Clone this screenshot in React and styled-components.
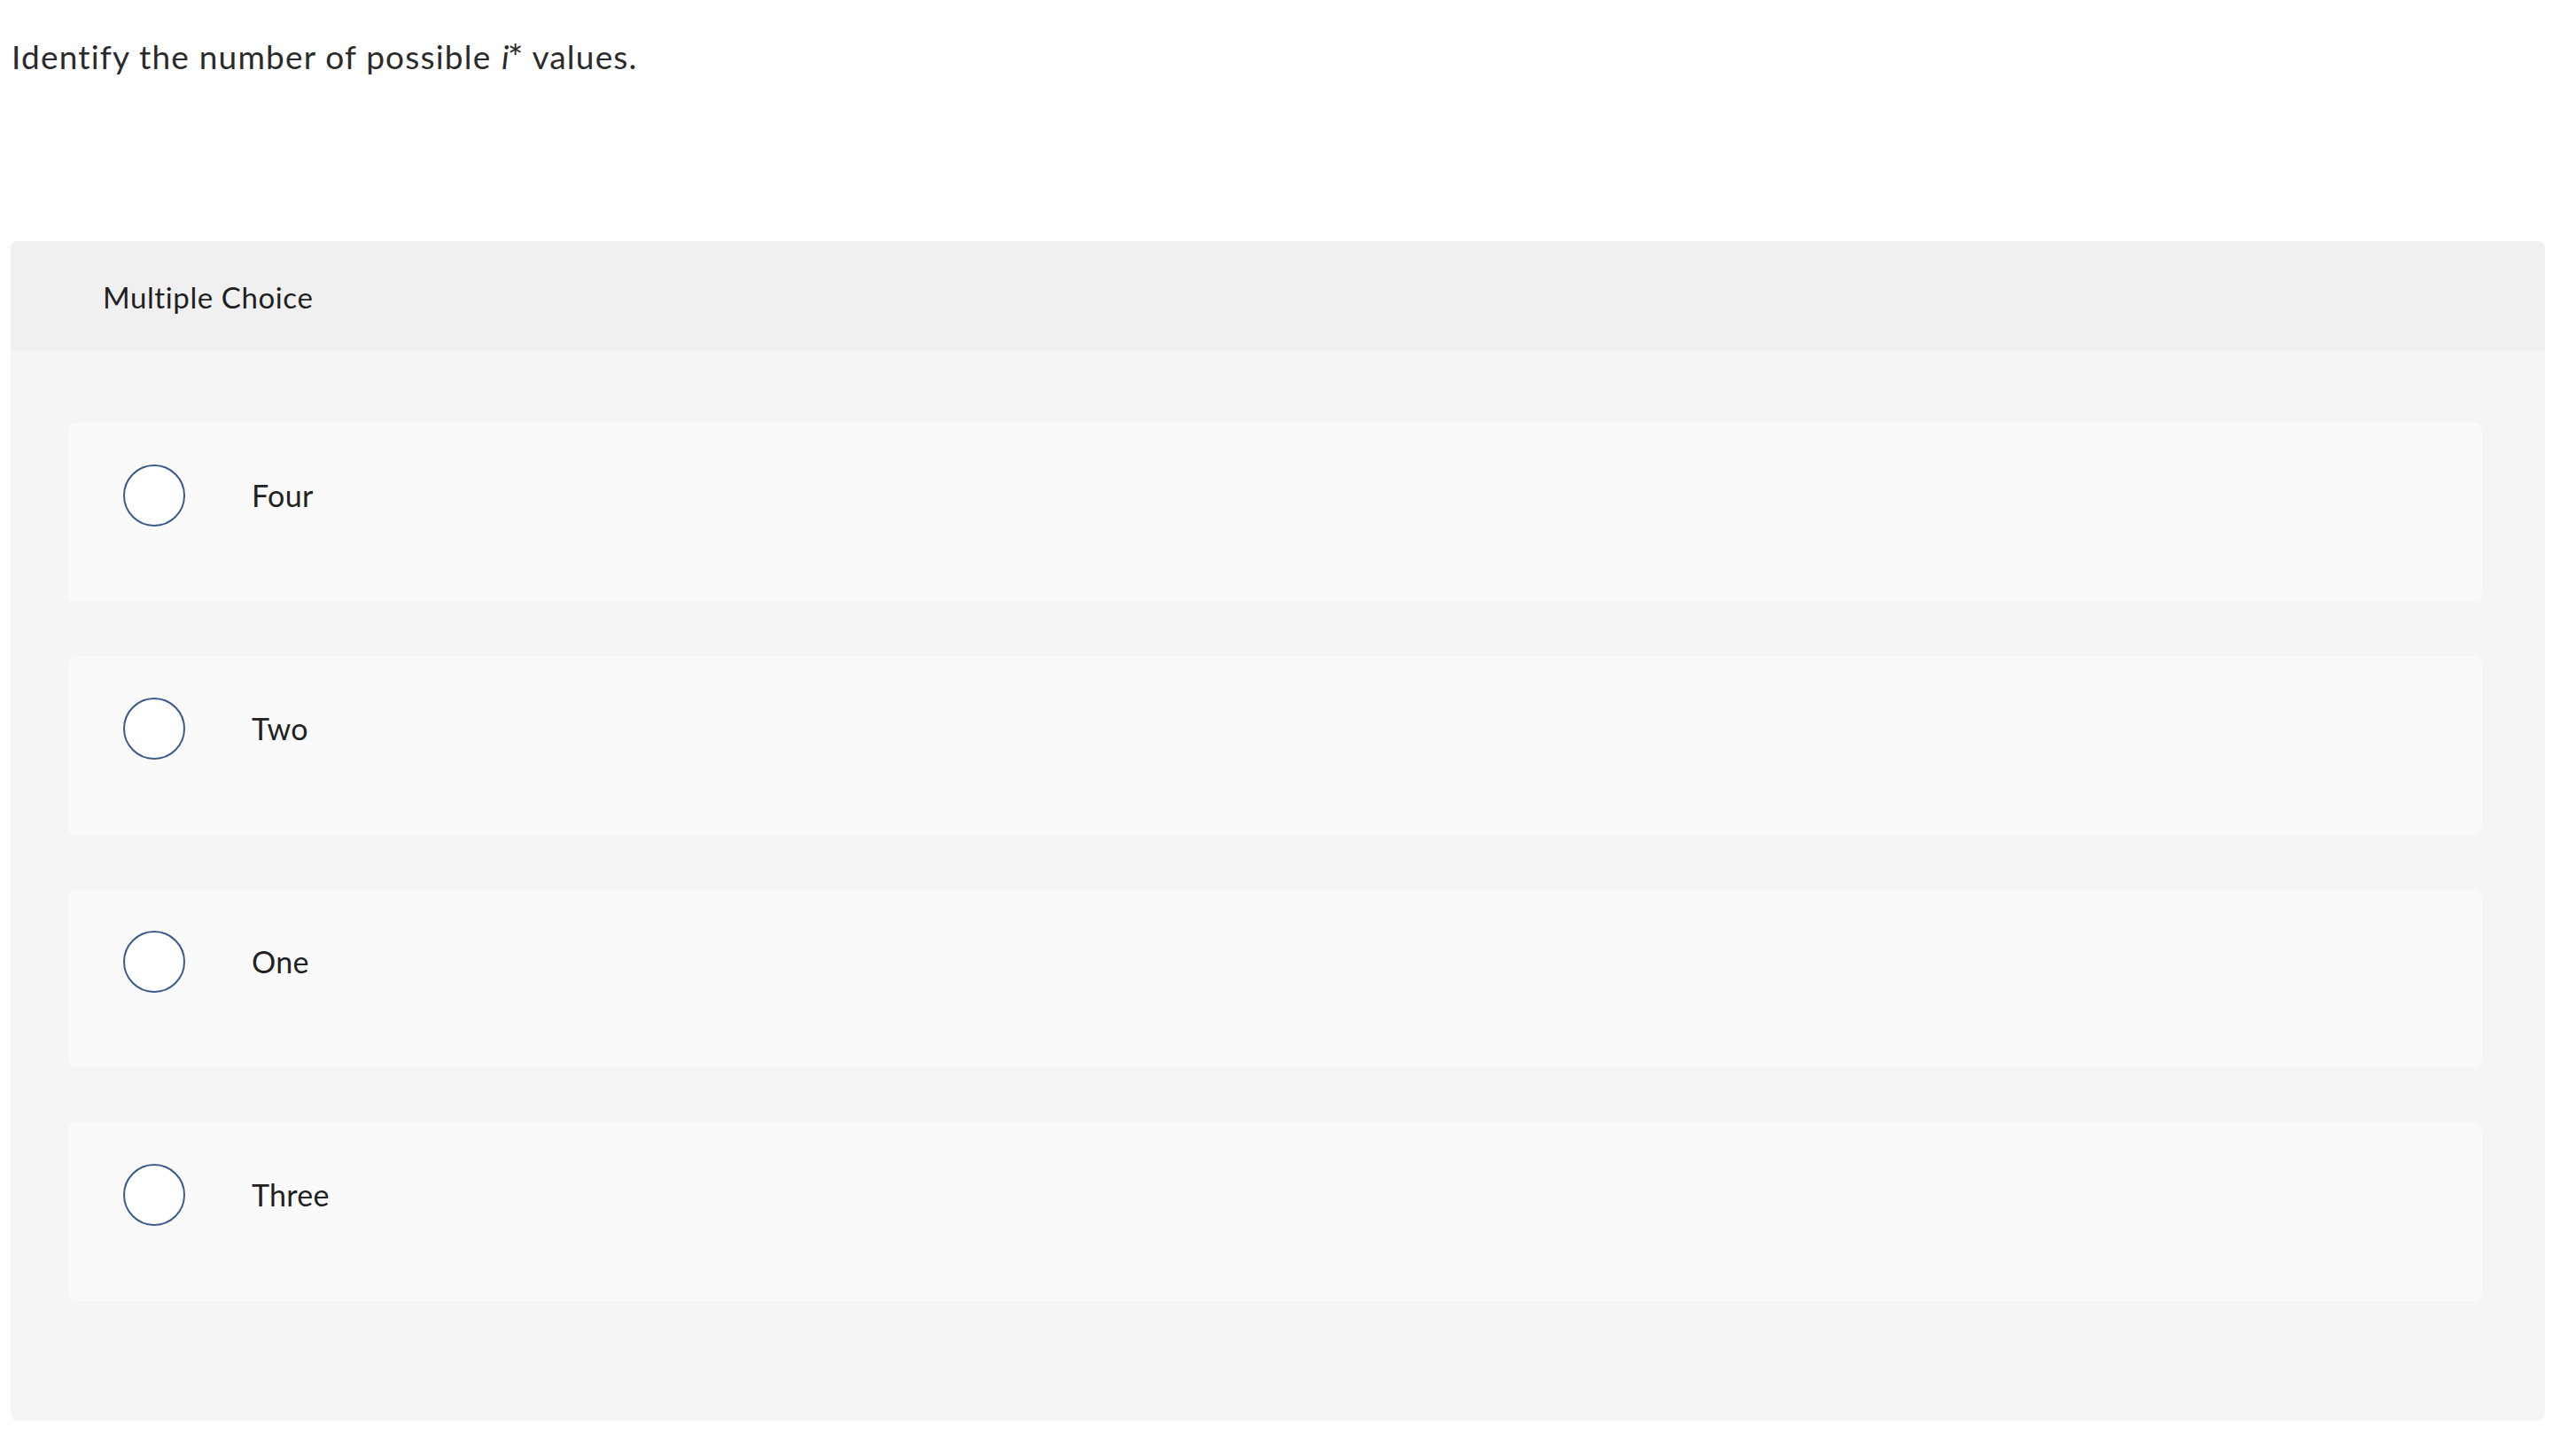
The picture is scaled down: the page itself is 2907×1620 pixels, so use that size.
import React, { useState } from 'react';
import styled, { createGlobalStyle } from 'styled-components';

const GlobalStyle = createGlobalStyle`
    html, body {
        margin: 0;
        padding: 0;
        background: #ffffff;
    }
    body {
        font-family: Lato, "Open Sans", "Liberation Sans", sans-serif;
        color: #222;
    }
`;

const choices = ['Four', 'Two', 'One', 'Three'];

function App() {
    let [picked, setPicked] = useState(null);
    return (
        <Page>
            <GlobalStyle />
            <Prompt>
                Identify the number of possible <Var>i</Var><Star>*</Star> values.
            </Prompt>
            <Panel>
                <PanelHeader>Multiple Choice</PanelHeader>
                <ChoiceList>
                    {
                        choices.map((choice, id) => {
                            return (
                                <ChoiceCard key={id} onClick={() => setPicked(id)}>
                                    <Radio checked={picked === id} />
                                    <ChoiceLabel>{choice}</ChoiceLabel>
                                </ChoiceCard>
                            );
                        })
                    }
                </ChoiceList>
            </Panel>
        </Page>
    );
}

export default App;

const Page = styled.div`
    padding: 42px 35px 16px 12px;
`;

const Prompt = styled.p`
    margin: 0 0 186px 1px;
    height: 44px;
    font-size: 37px;
    line-height: 44px;
    letter-spacing: 1.2px;
    color: #2b2b2b;
`;

const Var = styled.i`
    font-style: italic;
    margin-left: 1px;
`;

const Star = styled.span`
    font-size: 1.12em;
    line-height: 0;
    position: relative;
    top: 0.04em;
    margin-left: -3px;
    margin-right: -1px;
`;

const Panel = styled.section`
    background: #f5f5f5;
    border-radius: 8px;
    overflow: hidden;
`;

const PanelHeader = styled.div`
    display: flex;
    align-items: center;
    height: 125px;
    padding-left: 104px;
    background: #f0f0f0;
    font-size: 33px;
    letter-spacing: 0.6px;
    color: #1f1f1f;
`;

const ChoiceList = styled.div`
    display: flex;
    flex-direction: column;
    gap: 61px;
    padding: 80px 71px 135px 65px;
`;

const ChoiceCard = styled.div`
    display: flex;
    align-items: flex-start;
    gap: 75px;
    height: 202px;
    box-sizing: border-box;
    padding: 47px 62px;
    background: #fafafa;
    border-radius: 8px;
    cursor: pointer;
`;

const Radio = styled.span`
    flex: none;
    width: 70px;
    height: 70px;
    box-sizing: border-box;
    border-radius: 50%;
    border: 2.5px solid #3b5a8c;
    background: ${props => props.checked ? 'radial-gradient(circle, #3b5a8c 0 40%, #fff 42%)' : '#ffffff'};
`;

const ChoiceLabel = styled.span`
    font-size: 34px;
    line-height: 70px;
    letter-spacing: 0.3px;
    color: #222;
`;
